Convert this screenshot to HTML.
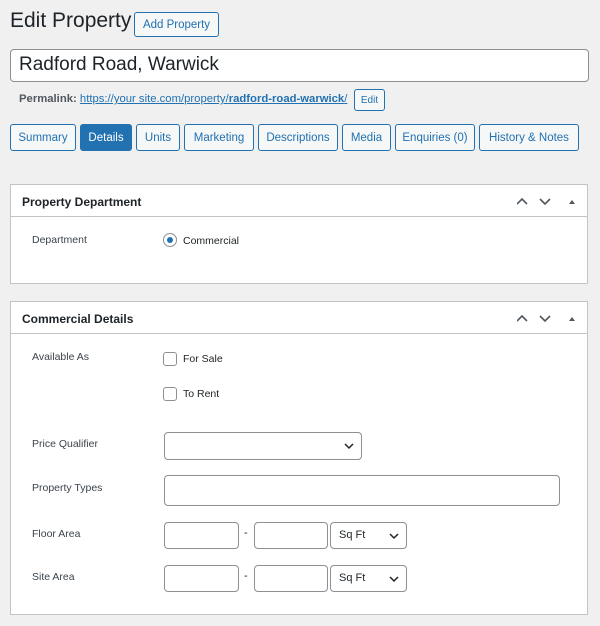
<!DOCTYPE html>
<html><head><style>
*{box-sizing:border-box;margin:0;padding:0}
body{width:600px;height:626px;background:#f0f0f1;font-family:"Liberation Sans",sans-serif;color:#1d2327;position:relative;overflow:hidden;font-size:11px}
.a{position:absolute}
.btn{position:absolute;border:1px solid #2271b1;border-radius:3px;background:#f6f7f7;color:#2271b1;font-size:11.5px;text-align:center;display:flex;align-items:center;justify-content:center}
.box{position:absolute;left:10px;width:578px;background:#fff;border:1px solid #c3c4c7}
.hd{height:32px;border-bottom:1px solid #c3c4c7;font-weight:bold;font-size:12px;padding:10px 11px}
.lbl{position:absolute;left:21px;font-size:10.5px;color:#3c434a}
.inp{position:absolute;border:1px solid #8c8f94;border-radius:4px;background:#fff}
.cb{position:absolute;width:14px;height:14px;border:1px solid #8c8f94;border-radius:3px;background:#fff}
.ctl{position:absolute;right:0px;top:10px}
</style></head><body>
<div class="a" style="left:10px;top:9px;font-size:21px;color:#1d2327">Edit Property</div>
<div class="btn" style="left:134px;top:12px;width:85px;height:25px">Add Property</div>
<div class="inp" style="left:10px;top:49px;width:579px;height:33px;font-size:19px;padding:4px 8px">Radford Road, Warwick</div>
<div class="a" style="left:19px;top:93px;font-size:11.3px;color:#50575e"><b>Permalink:</b> <span style="color:#2271b1;text-decoration:underline">https://your site.com/property/<b>radford-road-warwick</b>/</span></div>
<div class="btn" style="left:354px;top:89px;width:31px;height:22px;font-size:10px">Edit</div>
<div class="btn" style="left:10px;top:124px;width:66px;height:27px">Summary</div>
<div class="btn" style="left:80px;top:124px;width:52px;height:27px;background:#2271b1;color:#fff;border-color:#2271b1">Details</div>
<div class="btn" style="left:136px;top:124px;width:44px;height:27px">Units</div>
<div class="btn" style="left:184px;top:124px;width:70px;height:27px">Marketing</div>
<div class="btn" style="left:258px;top:124px;width:80px;height:27px">Descriptions</div>
<div class="btn" style="left:342px;top:124px;width:49px;height:27px">Media</div>
<div class="btn" style="left:395px;top:124px;width:80px;height:27px">Enquiries (0)</div>
<div class="btn" style="left:479px;top:124px;width:100px;height:27px">History &amp; Notes</div>

<div class="box" style="top:184px;height:100px"><div class="hd">Property Department</div>
<svg class="ctl" width="70" height="12" viewBox="0 0 70 12"><path d="M0 9l5-5 5 5M23 4l5 5 5-5" fill="none" stroke="#50575e" stroke-width="1.6"/><path d="M52 9l3-4 3 4z" fill="#50575e"/></svg></div>
<div class="lbl" style="left:32px;top:234px">Department</div>
<div class="a" style="left:163px;top:233px;width:14px;height:14px;border:1px solid #8c8f94;border-radius:50%;background:#fff"><div style="margin:3px;width:6px;height:6px;border-radius:50%;background:#2271b1"></div></div>
<div class="a" style="left:183px;top:235px;font-size:10.5px">Commercial</div>

<div class="box" style="top:301px;height:314px"><div class="hd">Commercial Details</div>
<svg class="ctl" width="70" height="12" viewBox="0 0 70 12"><path d="M0 9l5-5 5 5M23 4l5 5 5-5" fill="none" stroke="#50575e" stroke-width="1.6"/><path d="M52 9l3-4 3 4z" fill="#50575e"/></svg></div>
<div class="lbl" style="left:32px;top:351px">Available As</div>
<div class="cb" style="left:163px;top:352px"></div><div class="a" style="left:183px;top:353px;font-size:10.5px">For Sale</div>
<div class="cb" style="left:163px;top:387px"></div><div class="a" style="left:183px;top:388px;font-size:10.5px">To Rent</div>
<div class="lbl" style="left:32px;top:438px">Price Qualifier</div>
<div class="inp" style="left:164px;top:432px;width:198px;height:28px"><svg class="a" style="right:7px;top:10px" width="10" height="7"><path d="M1 1l4 4 4-4" fill="none" stroke="#1d2327" stroke-width="1.5"/></svg></div>
<div class="lbl" style="left:32px;top:482px">Property Types</div>
<div class="inp" style="left:164px;top:475px;width:396px;height:31px"></div>
<div class="lbl" style="left:32px;top:528px">Floor Area</div>
<div class="inp" style="left:164px;top:522px;width:75px;height:27px"></div>
<div class="a" style="left:244px;top:527px">-</div>
<div class="inp" style="left:254px;top:522px;width:74px;height:27px"></div>
<div class="inp" style="left:330px;top:522px;width:77px;height:27px;padding:6px 8px;font-size:11px">Sq Ft<svg class="a" style="right:7px;top:10px" width="10" height="7"><path d="M1 1l4 4 4-4" fill="none" stroke="#1d2327" stroke-width="1.5"/></svg></div>
<div class="lbl" style="left:32px;top:571px">Site Area</div>
<div class="inp" style="left:164px;top:565px;width:75px;height:27px"></div>
<div class="a" style="left:244px;top:570px">-</div>
<div class="inp" style="left:254px;top:565px;width:74px;height:27px"></div>
<div class="inp" style="left:330px;top:565px;width:77px;height:27px;padding:6px 8px;font-size:11px">Sq Ft<svg class="a" style="right:7px;top:10px" width="10" height="7"><path d="M1 1l4 4 4-4" fill="none" stroke="#1d2327" stroke-width="1.5"/></svg></div>
</body></html>
